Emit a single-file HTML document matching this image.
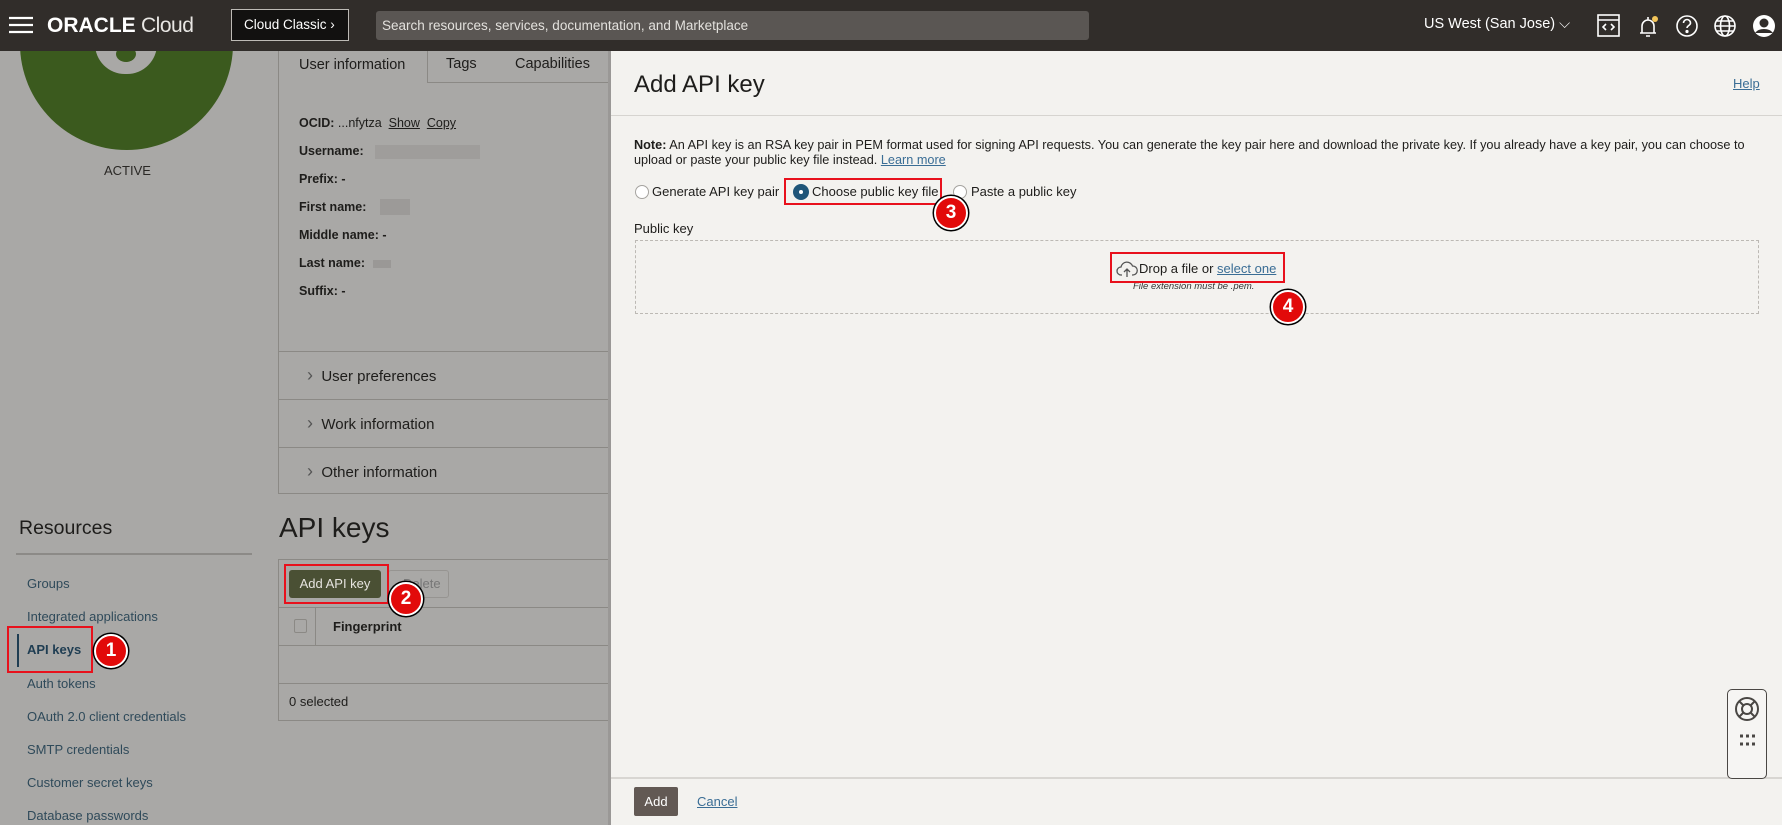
<!DOCTYPE html>
<html><head><meta charset="utf-8"><style>
*{box-sizing:border-box;margin:0;padding:0}
body{width:1782px;height:825px;overflow:hidden;position:relative;font-family:"Liberation Sans",Arial,sans-serif;background:#a9a8a6;color:#161513}
.a{position:absolute;white-space:nowrap}
.hdr{left:0;top:0;width:1782px;height:51px;background:#312d2a}
.red{position:absolute;border:2px solid #e8111c}
.badge{position:absolute;width:34px;height:34px;border-radius:50%;background:#e20a0a;border:2px solid #fff;box-shadow:0 0 0 1.5px #000;color:#fff;font-weight:bold;font-size:19px;text-align:center;line-height:30px}
.lnk{color:#2f4a5a;font-size:13px}
.dk{color:#1e1d1b}
.b{font-weight:bold}
</style></head><body>
<div class="a" style="left:20px;top:-62px;width:213px;height:212px;border-radius:50%;background:#3b5a1e;overflow:hidden"><div style="position:absolute;left:75px;top:0;width:62px;height:136px;border-radius:0 0 30px 30px;background:#a9a8a6"></div><div style="position:absolute;left:96px;top:108px;width:20px;height:16px;border-radius:50%;background:#3b5a1e"></div></div>
<div class="a" style="left:104px;top:163px;font-size:13px;color:#2a2825">ACTIVE</div>

<div class="a hdr"></div>
<svg class="a" style="left:9px;top:15px" width="24" height="20"><g stroke="#fff" stroke-width="2.2"><line x1="0" y1="3" x2="24" y2="3"/><line x1="0" y1="10" x2="24" y2="10"/><line x1="0" y1="17" x2="24" y2="17"/></g></svg>
<div class="a" style="left:47px;top:14px;color:#fff;font-size:21px;letter-spacing:-0.5px"><b style="letter-spacing:0px">ORACLE</b> <span style="font-weight:normal;color:#e8e6e3">Cloud</span></div>
<div class="a" style="left:231px;top:9px;width:118px;height:32px;border:1px solid #bdbab5;background:#121110;color:#fff;font-size:13.5px;line-height:30px;padding-left:12px">Cloud Classic ›</div>
<div class="a" style="left:376px;top:11px;width:713px;height:29px;background:#5a5653;border-radius:3px;color:#e3e1dd;font-size:13.5px;line-height:29px;padding-left:6px">Search resources, services, documentation, and Marketplace</div>
<div class="a" style="left:1424px;top:16px;color:#fff;font-size:14.5px">US West (San Jose) ⌵</div>
<svg class="a" style="left:1596px;top:13px" width="186" height="26" fill="none" stroke="#fff" stroke-width="1.6">
<rect x="2" y="2" width="21" height="21"/><line x1="2" y1="7" x2="23" y2="7"/><path d="M10 11l-3 3 3 3M15 11l3 3-3 3"/>
<path d="M44 20h16M46 20v-7a6 6 0 0112 0v7M50 23h4M52 4v3"/><circle cx="59" cy="6" r="3" fill="#f3c55a" stroke="none"/>
<circle cx="91" cy="13" r="10"/><path d="M87.5 10a3.5 3.5 0 117 0c0 2.5-3.5 2.5-3.5 5"/><circle cx="91" cy="18.5" r=".8" fill="#fff"/>
<circle cx="129" cy="13" r="10"/><ellipse cx="129" cy="13" rx="4.5" ry="10"/><path d="M119 13h20M121 8h16M121 18h16"/>
<circle cx="168" cy="13" r="11" fill="#fff" stroke="none"/><circle cx="168" cy="10" r="4.5" fill="#312d2a" stroke="none"/><path d="M159 20a10 7 0 0118 0" fill="#312d2a" stroke="none"/>
</svg>

<div class="a" style="left:278px;top:51px;width:330px;height:443px;border-left:1px solid #8b8985;border-bottom:1px solid #8b8985"></div>
<div class="a" style="left:427px;top:51px;width:181px;height:32px;border-left:1px solid #8b8985;border-bottom:1px solid #8b8985"></div>
<div class="a dk" style="left:299px;top:57px;font-size:14.5px">User information</div>
<div class="a dk" style="left:446px;top:56px;font-size:14.5px">Tags</div>
<div class="a dk" style="left:515px;top:56px;font-size:14.5px">Capabilities</div>
<div class="a dk" style="left:299px;top:116px;font-size:12.5px"><b>OCID:</b> ...nfytza &nbsp;<u>Show</u>&nbsp; <u>Copy</u></div>
<div class="a dk b" style="left:299px;top:144px;font-size:12.5px">Username:</div><div class="a" style="left:375px;top:145px;width:105px;height:14px;background:#9f9d9b"></div>
<div class="a dk b" style="left:299px;top:172px;font-size:12.5px">Prefix: -</div>
<div class="a dk b" style="left:299px;top:200px;font-size:12.5px">First name:</div><div class="a" style="left:380px;top:199px;width:30px;height:16px;background:#9c9a98"></div>
<div class="a dk b" style="left:299px;top:228px;font-size:12.5px">Middle name: -</div>
<div class="a dk b" style="left:299px;top:256px;font-size:12.5px">Last name:</div><div class="a" style="left:373px;top:260px;width:18px;height:8px;background:#9a9896"></div>
<div class="a dk b" style="left:299px;top:284px;font-size:12.5px">Suffix: -</div>
<div class="a" style="left:278px;top:351px;width:330px;border-top:1px solid #8b8985"></div>
<div class="a" style="left:278px;top:399px;width:330px;border-top:1px solid #8b8985"></div>
<div class="a" style="left:278px;top:447px;width:330px;border-top:1px solid #8b8985"></div>
<div class="a dk" style="left:307px;top:365px;font-size:15px"><span style="font-size:18px;color:#555">›</span>&nbsp; User preferences</div>
<div class="a dk" style="left:307px;top:413px;font-size:15px"><span style="font-size:18px;color:#555">›</span>&nbsp; Work information</div>
<div class="a dk" style="left:307px;top:461px;font-size:15px"><span style="font-size:18px;color:#555">›</span>&nbsp; Other information</div>

<div class="a dk" style="left:19px;top:517px;font-size:19.5px">Resources</div>
<div class="a" style="left:16px;top:553px;width:236px;border-top:2px solid #8c8a87"></div>
<div class="a lnk" style="left:27px;top:576px">Groups</div>
<div class="a lnk" style="left:27px;top:609px">Integrated applications</div>
<div class="a" style="left:17px;top:634px;width:2px;height:33px;background:#1f3d52"></div>
<div class="a lnk b" style="left:27px;top:642px;color:#1f3d52">API keys</div>
<div class="a lnk" style="left:27px;top:676px">Auth tokens</div>
<div class="a lnk" style="left:27px;top:709px">OAuth 2.0 client credentials</div>
<div class="a lnk" style="left:27px;top:742px">SMTP credentials</div>
<div class="a lnk" style="left:27px;top:775px">Customer secret keys</div>
<div class="a lnk" style="left:27px;top:808px">Database passwords</div>

<div class="a dk" style="left:279px;top:512px;font-size:28px">API keys</div>
<div class="a" style="left:278px;top:559px;width:330px;height:162px;border:1px solid #8b8985;border-right:none"></div>
<div class="a" style="left:289px;top:570px;width:92px;height:28px;background:#4a5034;border-radius:3px;color:#e6e4df;font-size:13px;line-height:28px;text-align:center">Add API key</div>
<div class="a" style="left:388px;top:570px;width:61px;height:28px;border:1px solid #969491;border-radius:3px;color:#777;font-size:13px;line-height:26px;padding-left:14px">Delete</div>
<div class="a" style="left:278px;top:607px;width:330px;border-top:1px solid #8b8985"></div>
<div class="a" style="left:278px;top:645px;width:330px;border-top:1px solid #8b8985"></div>
<div class="a" style="left:278px;top:683px;width:330px;border-top:1px solid #8b8985"></div>
<div class="a" style="left:315px;top:607px;height:38px;border-left:1px solid #8b8985"></div>
<div class="a" style="left:294px;top:619px;width:13px;height:14px;border:1px solid #8b8985;border-radius:2px"></div>
<div class="a dk b" style="left:333px;top:619px;font-size:13px">Fingerprint</div>
<div class="a dk" style="left:289px;top:694px;font-size:13px">0 selected</div>

<div class="a" style="left:608px;top:51px;width:1174px;height:774px;background:#f3f2ef;border-left:3px solid #9a9896"></div>
<div class="a" style="left:611px;top:115px;width:1171px;border-top:1px solid #d6d4d0"></div>
<div class="a dk" style="left:634px;top:71px;font-size:24px">Add API key</div>
<div class="a" style="left:1733px;top:76px;font-size:13px;color:#3a6d95;text-decoration:underline">Help</div>
<div class="a dk" style="left:634px;top:138px;font-size:12.7px;line-height:15px;white-space:normal;width:1130px"><b>Note:</b> An API key is an RSA key pair in PEM format used for signing API requests. You can generate the key pair here and download the private key. If you already have a key pair, you can choose to upload or paste your public key file instead. <u style="color:#3a6d95">Learn more</u></div>
<div class="a" style="left:635px;top:185px;width:14px;height:14px;border:1px solid #a5a39f;border-radius:50%;background:#fff"></div>
<div class="a dk" style="left:652px;top:184px;font-size:13px">Generate API key pair</div>
<div class="a" style="left:793px;top:184px;width:16px;height:16px;border-radius:50%;background:#1f5579"><div style="position:absolute;left:6px;top:6px;width:4px;height:4px;border-radius:50%;background:#fff"></div></div>
<div class="a dk" style="left:812px;top:184px;font-size:13px">Choose public key file</div>
<div class="a" style="left:953px;top:185px;width:14px;height:14px;border:1px solid #a5a39f;border-radius:50%;background:#fff"></div>
<div class="a dk" style="left:971px;top:184px;font-size:13px">Paste a public key</div>
<div class="a dk" style="left:634px;top:221px;font-size:13px">Public key</div>
<div class="a" style="left:635px;top:240px;width:1124px;height:74px;border:1px dashed #bcb9b4"></div>
<svg class="a" style="left:1116px;top:260px" width="22" height="18" fill="none" stroke="#555" stroke-width="1.3"><path d="M6 15H5a4 4 0 010-8 6 6 0 0111.5-1A4.5 4.5 0 0117 15h-1M11 17V9M8 12l3-3 3 3"/></svg>
<div class="a dk" style="left:1139px;top:261px;font-size:13px">Drop a file or <u style="color:#3a6d95">select one</u></div>
<div class="a" style="left:1133px;top:281px;font-size:9.5px;font-style:italic;color:#333">File extension must be .pem.</div>
<div class="a" style="left:611px;top:777px;width:1171px;border-top:2px solid #d8d6d2"></div>
<div class="a" style="left:634px;top:787px;width:44px;height:29px;background:#625954;border-radius:2px;color:#fff;font-size:13px;line-height:29px;text-align:center">Add</div>
<div class="a" style="left:697px;top:794px;font-size:13px;color:#3a6d95;text-decoration:underline">Cancel</div>
<div class="a" style="left:1727px;top:689px;width:40px;height:90px;border:1.5px solid #4a4744;border-radius:5px;background:#f6f5f3"></div>
<svg class="a" style="left:1731px;top:694px" width="32" height="80" fill="none" stroke="#4a4744" stroke-width="2"><circle cx="16" cy="15" r="11"/><circle cx="16" cy="15" r="5"/><path d="M8 7l4 4M24 7l-4 4M8 23l4-4M24 23l-4-4"/><g stroke-width="3"><path d="M9 42h3M15 42h3M21 42h3M9 50h3M15 50h3M21 50h3"/></g></svg>

<div class="red" style="left:7px;top:626px;width:86px;height:47px"></div><div class="badge" style="left:94px;top:634px">1</div>
<div class="red" style="left:284px;top:564px;width:105px;height:40px"></div><div class="badge" style="left:389px;top:582px">2</div>
<div class="red" style="left:784px;top:178px;width:158px;height:27px"></div><div class="badge" style="left:934px;top:196px">3</div>
<div class="red" style="left:1110px;top:252px;width:175px;height:31px"></div><div class="badge" style="left:1271px;top:290px">4</div>
</body></html>
